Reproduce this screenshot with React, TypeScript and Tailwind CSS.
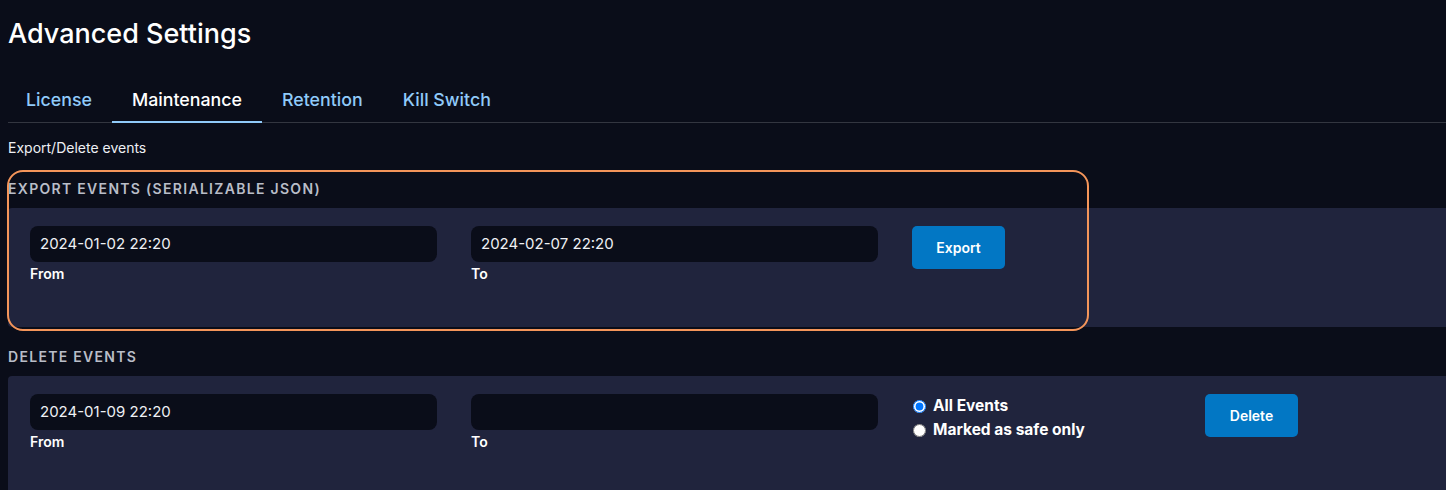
import React from "react";

const font = { fontFamily: "Inter, 'Noto Sans', sans-serif" };

function DateField({ value, label }: { value: string; label: string }) {
  return (
    <div className="flex w-[407px] flex-col">
      <div className="flex h-[36px] items-center rounded-[8px] bg-[#0a0d19] px-[10px] text-[15px] text-[#eef0f4]">
        {value}
      </div>
      <div className="mt-[3px] text-[14px] font-semibold leading-[18px] text-white">{label}</div>
    </div>
  );
}

export default function App() {
  const tabs = [
    { t: "License", a: false, first: true },
    { t: "Maintenance", a: true, first: false },
    { t: "Retention", a: false, first: false },
    { t: "Kill Switch", a: false, first: false },
  ];
  return (
    <div className="min-h-[490px] w-full overflow-hidden bg-[#0a0d19] text-white" style={font}>
      <div className="pl-2">
        <h1 className="pt-[16px] text-[27px] font-medium leading-[36px] text-white">Advanced Settings</h1>

        <div className="mt-[27px] flex border-b border-[#333640]">
          {tabs.map((tab) => (
            <div
              key={tab.t}
              className={
                (tab.first ? "pl-[18px] pr-[20px] " : "px-[20px] ") +
                (tab.a
                  ? "mb-[-1px] border-b-2 border-[#90caf9] pb-[10px] pt-[10px] text-[17.8px] font-medium leading-[22px] text-white"
                  : "mb-[-1px] border-b-2 border-transparent pb-[10px] pt-[10px] text-[17.8px] font-medium leading-[22px] text-[#90caf9]")
              }
            >
              {tab.t}
            </div>
          ))}
        </div>

        <div className="mt-[16px] text-[14px] leading-[18px] text-[#eef0f4]">Export/Delete events</div>

        <div className="relative mt-[23px]">
          <div className="pointer-events-none absolute left-[-1px] top-[-10px] h-[161px] w-[1082px] rounded-[16px] border-2 border-[#f4955a]" />
          <div className="text-[14px] font-semibold uppercase leading-[18px] tracking-[1.3px] text-[#b9bdc8]">
            Export events (serializable JSON)
          </div>
          <div className="mt-[10px] flex h-[119px] gap-[34px] rounded-l-[4px] bg-[#20243d] pl-[22px] pt-[18px]">
            <DateField value="2024-01-02 22:20" label="From" />
            <DateField value="2024-02-07 22:20" label="To" />
            <button className="h-[43px] w-[93px] rounded-[5px] bg-[#0277c4] text-[14px] font-semibold text-white">
              Export
            </button>
          </div>
        </div>

        <div className="mt-[21px] text-[14px] font-semibold uppercase leading-[18px] tracking-[1.3px] text-[#b9bdc8]">
          Delete events
        </div>
        <div className="mt-[10px] flex h-[130px] gap-[34px] rounded-l-[4px] bg-[#20243d] pl-[22px] pt-[18px]">
          <DateField value="2024-01-09 22:20" label="From" />
          <DateField value="" label="To" />
          <div className="flex w-[259px] flex-col gap-[2px] pl-[1px] pt-[1px]">
            <label className="flex h-[22px] items-center gap-[7px] text-[15.5px] font-bold leading-[22px] text-white">
              <input type="radio" name="del" defaultChecked className="m-0 h-[13px] w-[13px]" />
              All Events
            </label>
            <label className="flex h-[22px] items-center gap-[7px] text-[15.5px] font-bold leading-[22px] text-white">
              <input type="radio" name="del" className="m-0 h-[13px] w-[13px]" />
              Marked as safe only
            </label>
          </div>
          <button className="h-[43px] w-[93px] rounded-[5px] bg-[#0277c4] text-[14px] font-semibold text-white">
            Delete
          </button>
        </div>
      </div>
    </div>
  );
}
